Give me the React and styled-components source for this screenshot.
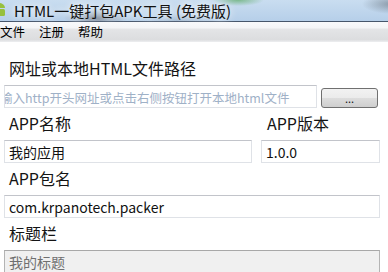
import React from 'react';
import styled, { createGlobalStyle } from 'styled-components';

const Global = createGlobalStyle`
  html, body { margin: 0; padding: 0; background: #fff; }
  body {
    width: 388px; height: 272px; overflow: hidden;
    font-family: "Noto Sans CJK SC", "Noto Sans", sans-serif;
  }
`;

const Window = styled.div`
  display: flex;
  flex-direction: column;
  width: 388px;
  height: 272px;
  overflow: hidden;
  background: #fff;
`;

const TitleBar = styled.div`
  flex: none;
  height: 21px;
  display: flex;
  align-items: center;
  gap: 8px;
  border-bottom: 1px solid #46566b;
  background:
    radial-gradient(ellipse 32px 9px at 96px 18px, rgba(70, 72, 80, 0.55), rgba(70,72,80,0) 100%),
    radial-gradient(ellipse 26px 6px at 238px 0px, rgba(90, 170, 100, 0.7), rgba(90,170,100,0) 100%),
    radial-gradient(ellipse 40px 8px at 180px 21px, rgba(120, 140, 160, 0.35), rgba(120,140,160,0) 100%),
    radial-gradient(ellipse 30px 10px at 392px 4px, rgba(80, 90, 100, 0.5), rgba(80,90,100,0) 100%),
    linear-gradient(#c9ddf0, #b6cfe9);
`;

const AppIcon = styled.svg`
  flex: none;
  margin-left: -8px;
  width: 14px;
  height: 15px;
`;

const TitleText = styled.span`
  font-size: 15px;
  line-height: 21px;
  color: #111;
  white-space: nowrap;
  text-shadow: 0 0 6px rgba(255,255,255,0.9), 0 0 10px rgba(255,255,255,0.7);
`;

const MenuBar = styled.div`
  flex: none;
  height: 20px;
  display: flex;
  align-items: center;
  gap: 14px;
  padding-left: 0;
  background: linear-gradient(#f8f9fb 0%, #f4f5f7 28%, #e3e4e6 38%, #dcdddf 88%, #eeeff1 100%);
`;

const MenuItem = styled.span`
  font-size: 12.5px;
  line-height: 20px;
  color: #000;
`;

const Content = styled.div`
  display: flex;
  flex-direction: column;
  padding: 11px 8px 0 4px;
`;

const Label = styled.div`
  height: 32px;
  line-height: 31px;
  font-size: 16px;
  color: #141414;
  padding-left: ${p => p.$indent || 5}px;
  white-space: nowrap;
`;

const Field = styled.input`
  box-sizing: border-box;
  width: 100%;
  height: 23px;
  margin: 0;
  padding: 0 4px;
  font-family: "Noto Sans CJK SC", "Noto Sans", sans-serif;
  font-size: 14px;
  color: ${p => (p.disabled ? '#6f6f6f' : '#111')};
  background: ${p => (p.disabled ? '#f0f0f0' : '#fff')};
  border: 1px solid ${p => (p.disabled ? '#b4b4b4' : '#dfe2e7')};
  border-top-color: ${p => (p.disabled ? '#a8a8a8' : '#c2c4ca')};
  border-radius: 0;
  outline: none;
  &::placeholder {
    color: #9fb1c7;
    font-size: 12.5px;
  }
`;

const PathField = styled(Field)`
  padding-left: 0;
  text-indent: -5px;
`;

const PathRow = styled.div`
  display: grid;
  grid-template-columns: 313px 57px;
  gap: 4px;
  align-items: center;
`;

const BrowseButton = styled.button`
  height: 20px;
  margin: 2px 0 0 0;
  padding: 0;
  border: 1px solid #707070;
  border-radius: 3px;
  background: linear-gradient(#f2f2f2 0%, #ebebeb 50%, #dddddd 51%, #cfcfcf 100%);
  font-family: "Noto Sans CJK SC", "Noto Sans", sans-serif;
  font-size: 11px;
  line-height: 14px;
  color: #111;
`;

const TwoCol = styled.div`
  display: grid;
  grid-template-columns: 248px 119px;
  column-gap: 9px;
`;

export default function App() {
  return (
    <Window>
      <Global />
      <TitleBar>
        <AppIcon viewBox="0 0 14 15">
          <path d="M1 5 a6 5 0 0 1 12 0 z" fill="#97c03d" />
          <rect x="1" y="6" width="12" height="7" rx="1.5" fill="#97c03d" />
          <rect x="5" y="12" width="2" height="3" rx="1" fill="#97c03d" />
        </AppIcon>
        <TitleText>HTML一键打包APK工具 (免费版)</TitleText>
      </TitleBar>
      <MenuBar>
        <MenuItem>文件</MenuItem>
        <MenuItem>注册</MenuItem>
        <MenuItem>帮助</MenuItem>
      </MenuBar>
      <Content>
        <Label>网址或本地HTML文件路径</Label>
        <PathRow>
          <PathField placeholder="输入http开头网址或点击右侧按钮打开本地html文件" readOnly />
          <BrowseButton>...</BrowseButton>
        </PathRow>
        <TwoCol>
          <Label>APP名称</Label>
          <Label $indent={6}>APP版本</Label>
          <Field defaultValue="我的应用" />
          <Field defaultValue="1.0.0" />
        </TwoCol>
        <Label>APP包名</Label>
        <Field defaultValue="com.krpanotech.packer" />
        <Label>标题栏</Label>
        <Field defaultValue="我的标题" disabled />
      </Content>
    </Window>
  );
}
